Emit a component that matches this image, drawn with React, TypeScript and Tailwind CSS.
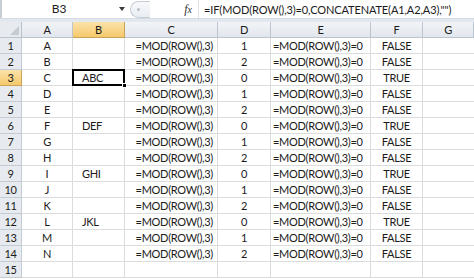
import React from "react";

const rows: [string, string, string, string][] = [
  ["A", "", "1", "FALSE"],
  ["B", "", "2", "FALSE"],
  ["C", "ABC", "0", "TRUE"],
  ["D", "", "1", "FALSE"],
  ["E", "", "2", "FALSE"],
  ["F", "DEF", "0", "TRUE"],
  ["G", "", "1", "FALSE"],
  ["H", "", "2", "FALSE"],
  ["I", "GHI", "0", "TRUE"],
  ["J", "", "1", "FALSE"],
  ["K", "", "2", "FALSE"],
  ["L", "JKL", "0", "TRUE"],
  ["M", "", "1", "FALSE"],
  ["N", "", "2", "FALSE"],
];

const cols = ["A", "B", "C", "D", "E", "F", "G"];

const font = { fontFamily: "Lato, 'Liberation Sans', sans-serif" };

export default function App() {
  return (
    <div className="w-[474px] h-[279px] overflow-hidden bg-white text-[#1b1b1b]" style={font}>
      {/* formula bar */}
      <div className="h-[18px] flex items-center bg-white border-l-2 border-[#c8ced6] overflow-hidden">
        <div className="shrink-0 w-[114px] text-center text-[12px] leading-none">B3</div>
        <div className="shrink-0 w-[12px] flex justify-center">
          <svg width="6" height="4" viewBox="0 0 6 4"><path d="M0 0h6L3 4z" fill="#3a3a3a" /></svg>
        </div>
        <div className="shrink-0 ml-[2px] w-[20px] h-[17px] rounded-l-full border border-r-0 border-[#c5ccd5] bg-gradient-to-b from-[#f8f9fb] to-[#e9edf2] flex items-center pl-[6px]">
          <div className="w-[3px] h-[3px] rounded-full bg-[#b8bfc8]" />
        </div>
        <div className="shrink-0 w-[48px] flex justify-end pr-[6px]">
          <span className="italic text-[12px] leading-none text-[#333]" style={{ fontFamily: "'Liberation Serif', serif" }}>f<span className="text-[10px]">x</span></span>
        </div>
        <div className="shrink-0 h-[18px] w-px bg-[#dfe3e8]" />
        <div className="shrink-0 pl-[5px] text-[11px] tracking-[-0.12px] leading-none whitespace-nowrap">=IF(MOD(ROW(),3)=0,CONCATENATE(A1,A2,A3),"")</div>
      </div>
      <div className="h-[4px] bg-[#e3e8ee] border-t border-[#d5dbe2]" />
      {/* sheet */}
      <div className="grid grid-cols-[22px_51px_52px_93px_53px_100px_52px_51px] auto-rows-[16px] text-[11px] tracking-[-0.3px] leading-none">
        {/* header row */}
        <div className="relative bg-[#e7ebf0] border-r border-b border-[#b9c2cd]">
          <svg className="absolute right-[2px] bottom-[2px]" width="9" height="9" viewBox="0 0 9 9"><path d="M9 0V9H0z" fill="#c4cbd4" /></svg>
        </div>
        {cols.map((c) => (
          <div
            key={c}
            className={
              c === "B"
                ? "flex items-center justify-center bg-gradient-to-b from-[#fbe3a9] to-[#f5c96a] border-r border-b border-[#c9a35a]"
                : "flex items-center justify-center bg-gradient-to-b from-[#f2f4f7] to-[#e2e7ed] border-r border-b border-[#bcc5cf]"
            }
          >
            {c}
          </div>
        ))}
        {rows.map((r, i) => {
          const n = i + 1;
          const sel = n === 3;
          return (
            <React.Fragment key={n}>
              <div
                className={
                  sel
                    ? "flex items-center justify-center bg-gradient-to-b from-[#fbe3a9] to-[#f5c96a] border-r border-b border-[#c9a35a]"
                    : "flex items-center justify-center bg-[#e7ebf0] border-r border-b border-[#c3cbd5]"
                }
              >
                {n}
              </div>
              <div className="flex items-center justify-center border-r border-b border-[#dadcdf]">{r[0]}</div>
              <div className={sel ? "relative flex items-center pl-[9px] border-r border-b border-[#dadcdf]" : "flex items-center pl-[9px] border-r border-b border-[#dadcdf]"}>
                {r[1]}
                {sel && (
                  <>
                    <div className="absolute left-[-1px] top-[-1px] right-[-1px] bottom-[-1px] border-2 border-black" />
                    <div className="absolute right-[-3px] bottom-[-3px] w-[5px] h-[5px] bg-black border border-white" />
                  </>
                )}
              </div>
              <div className="flex items-center justify-end pr-[4px] border-r border-b border-[#dadcdf] whitespace-nowrap">=MOD(ROW(),3)</div>
              <div className="flex items-center justify-center border-r border-b border-[#dadcdf]">{r[2]}</div>
              <div className="flex items-center pl-[2px] border-r border-b border-[#dadcdf] whitespace-nowrap">=MOD(ROW(),3)=0</div>
              <div className="flex items-center justify-center border-r border-b border-[#dadcdf]">{r[3]}</div>
              <div className="border-b border-[#dadcdf]" />
            </React.Fragment>
          );
        })}
        {/* row 15 */}
        <div className="flex items-center justify-center bg-[#e7ebf0] border-r border-b border-[#c3cbd5]">15</div>
        <div className="border-r border-b border-[#dadcdf]" />
        <div className="border-r border-b border-[#dadcdf]" />
        <div className="border-r border-b border-[#dadcdf]" />
        <div className="border-r border-b border-[#dadcdf]" />
        <div className="border-r border-b border-[#dadcdf]" />
        <div className="border-r border-b border-[#dadcdf]" />
        <div className="border-b border-[#dadcdf]" />
      </div>
    </div>
  );
}
